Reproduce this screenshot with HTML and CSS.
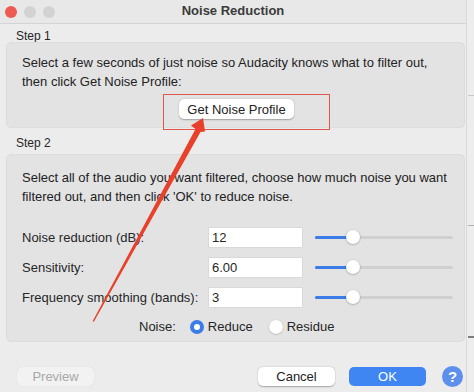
FILE: index.html
```html
<!DOCTYPE html>
<html>
<head>
<meta charset="utf-8">
<link rel="stylesheet" href="styles.css">
</head>
<body>
<div class="screen">
  <div class="window">
    <div class="titlebar">
      <div class="lights">
        <span class="light red"></span>
        <span class="light gray"></span>
        <span class="light gray"></span>
      </div>
      <div class="title">Noise Reduction</div>
    </div>
    <div class="content">
      <div class="step-label">Step 1</div>
      <div class="group group1">
        <p class="desc">Select a few seconds of just noise so Audacity knows what to filter out,<br>then click Get Noise Profile:</p>
        <div class="profile-row">
          <div class="highlight">
            <button class="btn">Get Noise Profile</button>
          </div>
        </div>
      </div>
      <div class="step-label step2">Step 2</div>
      <div class="group group2">
        <p class="desc desc2">Select all of the audio you want filtered, choose how much noise you want<br>filtered out, and then click 'OK' to reduce noise.</p>
        <div class="rows">
          <div class="row">
            <span class="lbl">Noise reduction (dB):</span>
            <span class="field">12</span>
            <div class="slider"><div class="fill"></div><div class="thumb"></div></div>
          </div>
          <div class="row">
            <span class="lbl">Sensitivity:</span>
            <span class="field">6.00</span>
            <div class="slider"><div class="fill"></div><div class="thumb"></div></div>
          </div>
          <div class="row">
            <span class="lbl">Frequency smoothing (bands):</span>
            <span class="field">3</span>
            <div class="slider"><div class="fill"></div><div class="thumb"></div></div>
          </div>
        </div>
        <div class="noise-row">
          <span class="noise-lbl">Noise:</span>
          <span class="radio on"></span><span class="radio-lbl">Reduce</span>
          <span class="radio"></span><span class="radio-lbl">Residue</span>
        </div>
      </div>
      <div class="footer">
        <button class="btn preview">Preview</button>
        <div class="spacer"></div>
        <button class="btn cancel">Cancel</button>
        <button class="btn ok">OK</button>
        <span class="help">?</span>
      </div>
    </div>
  </div>
  <div class="edge">
    <span class="mark m1"></span>
    <span class="mark m2"></span>
    <span class="mark m3"></span>
  </div>
  <svg class="arrow" width="474" height="392" viewBox="0 0 474 392">
    <polygon points="92.5,321.5 94,321.5 200.5,132 205,131.5 203,118 191,125.5 195.5,129" fill="#e8402a"/>
  </svg>
</div>
</body>
</html>
```
FILE: styles.css
```css
* { box-sizing: border-box; }
html, body { margin: 0; padding: 0; }
body {
  width: 474px;
  height: 392px;
  overflow: hidden;
  font-family: "Liberation Sans", Arial, sans-serif;
  color: #262626;
  background: #ececec;
}
.screen {
  position: relative;
  display: flex;
  width: 474px;
  height: 392px;
}
.window {
  width: 466px;
  height: 392px;
  background: #ececec;
  display: flex;
  flex-direction: column;
}
.titlebar {
  height: 24px;
  flex: none;
  border-bottom: 1px solid #d4d4d4;
  display: flex;
  align-items: center;
  position: relative;
  background: #e8e8e8;
}
.lights {
  display: flex;
  gap: 7px;
  padding-left: 5px;
}
.light {
  width: 12px;
  height: 12px;
  border-radius: 50%;
  display: block;
}
.light.red { background: #ee5a52; }
.light.gray { background: #d3d3d3; }
.title {
  position: absolute;
  left: 0;
  right: 0;
  top: 3px;
  text-align: center;
  font-weight: bold;
  font-size: 13px;
  color: #3a3a3a;
}
.content {
  flex: 1;
  display: flex;
  flex-direction: column;
  padding: 0 1px 0 6px;
}
.step-label {
  font-size: 12px;
  padding: 5px 0 0 10px;
  height: 18px;
  flex: none;
  color: #262626;
}
.step2 { padding-top: 8px; height: 26px; }
.group {
  flex: none;
  background: #e3e3e3;
  border: 1px solid #dcdcdc;
  border-radius: 5px;
}
.group1 { height: 86px; }
.group2 { height: 188px; }
.desc {
  margin: 0;
  font-size: 13px;
  line-height: 19px;
  padding: 10px 0 0 15px;
  color: #222;
}
.desc2 { padding-top: 13px; }
.profile-row {
  display: flex;
  padding-left: 156px;
  padding-top: 3px;
}
.highlight {
  width: 167px;
  height: 36px;
  border: 1.5px solid #e2574c;
  display: flex;
  align-items: flex-start;
  padding: 4px 0 0 15px;
}
.btn {
  font-family: inherit;
  font-size: 13px;
  height: 20px;
  border: none;
  border-radius: 5px;
  background: #ffffff;
  color: #222;
  box-shadow: 0 0.5px 1.5px rgba(0,0,0,0.3);
  padding: 0;
}
.highlight .btn { width: 115px; }
.rows {
  display: flex;
  flex-direction: column;
  gap: 10px;
  padding: 21px 0 0 15px;
}
.row {
  display: flex;
  align-items: center;
  height: 20px;
}
.lbl {
  width: 187px;
  font-size: 13px;
}
.field {
  width: 93px;
  height: 19px;
  background: #fff;
  font-size: 13px;
  line-height: 20px;
  padding-left: 3px;
  box-shadow: 0 0 0 0.5px #d0d0d0;
}
.slider {
  position: relative;
  width: 138px;
  height: 14px;
  margin-left: 13px;
  display: flex;
  align-items: center;
}
.slider::before {
  content: "";
  display: block;
  width: 100%;
  height: 3px;
  border-radius: 2px;
  background: #d0d0d0;
}
.fill {
  position: absolute;
  left: 0;
  top: 5.5px;
  width: 38px;
  height: 3px;
  border-radius: 2px;
  background: #3b7ce8;
}
.thumb {
  position: absolute;
  left: 31px;
  top: 0;
  width: 14px;
  height: 14px;
  border-radius: 50%;
  background: #fff;
  box-shadow: 0 0.5px 2px rgba(0,0,0,0.35);
}
.noise-row {
  display: flex;
  align-items: center;
  padding: 12px 0 0 132px;
  font-size: 13px;
}
.noise-lbl { margin-right: 14px; }
.radio {
  width: 14px;
  height: 14px;
  border-radius: 50%;
  background: #fff;
  box-shadow: 0 0.5px 1.5px rgba(0,0,0,0.3);
  margin-right: 4px;
}
.radio.on {
  background: #fff;
  border: 4px solid #3b7ce8;
  box-shadow: none;
}
.radio-lbl { margin-right: 16px; }
.footer {
  display: flex;
  align-items: center;
  padding: 24px 0 0 11px;
}
.footer .btn { width: 77px; height: 19px; }
.preview {
  background: #f2f2f2 !important;
  color: #a8a8a8 !important;
  box-shadow: 0 0 1px rgba(0,0,0,0.15) !important;
}
.spacer { flex: 1; }
.cancel { margin-right: 14px; }
.ok {
  background: #3f86f2 !important;
  color: #fff !important;
  box-shadow: none !important;
  margin-right: 16px;
}
.help {
  width: 21px;
  height: 21px;
  border-radius: 50%;
  background: #5d8fec;
  color: #fff;
  font-size: 15px;
  font-weight: bold;
  display: flex;
  align-items: center;
  justify-content: center;
  margin-right: 2px;
}
.edge {
  width: 8px;
  height: 392px;
  background: #ededed;
  border-left: 1px solid #dadada;
  position: relative;
}
.mark {
  position: absolute;
  left: 1px;
  width: 7px;
  height: 2px;
  background: #8a8a8a;
}
.m1 { top: 95px; height: 1px; background: #c8c8c8; }
.m2 { top: 225px; height: 1px; background: #b0b0b0; }
.m3 { top: 336px; background: #7d7d7d; }
.arrow {
  position: absolute;
  left: 0;
  top: 0;
  pointer-events: none;
}
```
